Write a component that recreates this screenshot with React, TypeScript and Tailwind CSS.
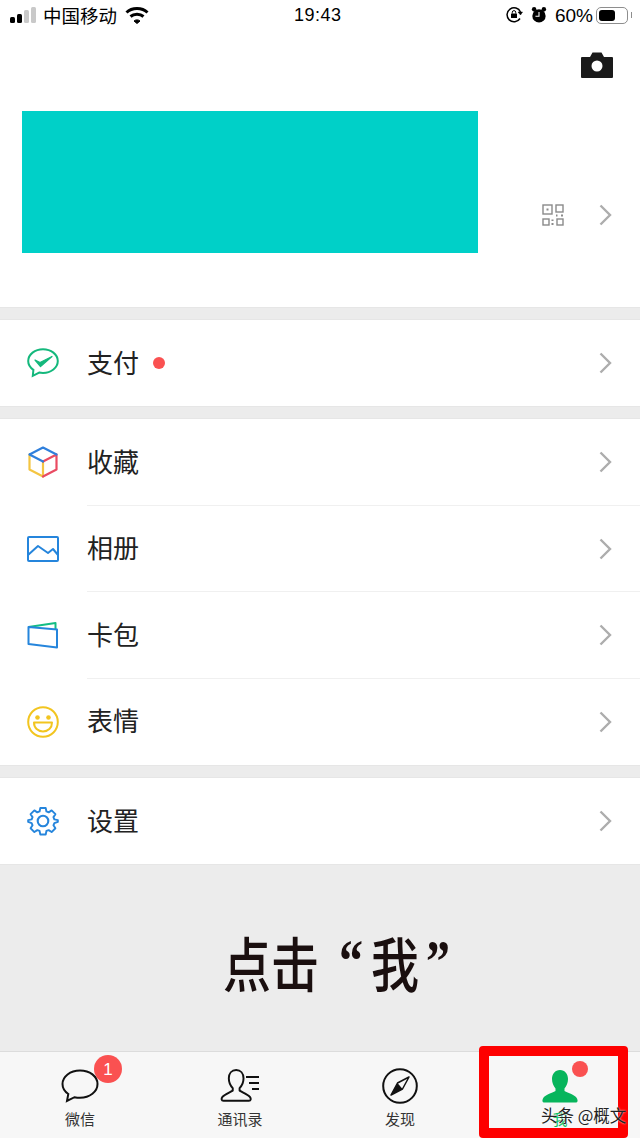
import type { ReactNode } from 'react';

const cjk = { fontFamily: '"Noto Sans CJK SC", "Liberation Sans", sans-serif' };
const latin = { fontFamily: '"Liberation Sans", sans-serif' };

function Chevron() {
  return (
    <svg width="14" height="22" viewBox="0 0 14 22" fill="none" stroke="#adadad" strokeWidth="2.400">
      <path d="M2.500 1.500 12 11 2.500 20.500" />
    </svg>
  );
}

function PayIcon() {
  return (
    <svg width="32" height="30" viewBox="0 0 32 30" fill="none">
      <path d="M16 1.200C8 1.200 1.200 6.400 1.200 13c0 3.600 2 6.700 5.200 8.800L5.800 27.800l6.400-3.300c1.200.3 2.500.4 3.800.4 8 0 14.800-5.300 14.800-11.900S24 1.200 16 1.200Z" stroke="#14b87c" strokeWidth="2" />
      <path d="M8 12 13 14.500 25 8.500 13.500 18.500Z" fill="#14b87c" stroke="#14b87c" strokeWidth="1.200" strokeLinejoin="round" />
    </svg>
  );
}

function BoxIcon() {
  return (
    <svg width="30" height="32" viewBox="0 0 30 32" fill="none" strokeWidth="2.200" strokeLinecap="round" strokeLinejoin="round">
      <path d="M1.500 8.500V23.500L15 30.500V15.500" stroke="#f4c542" />
      <path d="M15 15.500 28.500 8.500V23.500L15 30.500" stroke="#e94b62" />
      <path d="M1.500 8.500 15 1.500 28.500 8.500M1.500 8.500 15 15.500" stroke="#2f7fdc" />
    </svg>
  );
}

function PhotoIcon() {
  return (
    <svg width="32" height="26" viewBox="0 0 32 26" fill="none" stroke="#2585dc" strokeWidth="2" strokeLinejoin="round">
      <rect x="1" y="1" width="30" height="24" rx="1" />
      <path d="M1 19 11 10 21 17 26 13 31 19" />
    </svg>
  );
}

function CardIcon() {
  return (
    <svg width="32" height="28" viewBox="0 0 32 28" fill="none" strokeWidth="2" strokeLinejoin="round">
      <path d="M1.500 6 28.500 2V8" stroke="#12bd84" />
      <path d="M1.500 6 30 8.500V26.500L1.500 23Z" stroke="#2585dc" />
    </svg>
  );
}

function SmileIcon() {
  return (
    <svg width="32" height="32" viewBox="0 0 32 32" fill="none">
      <circle cx="16" cy="16" r="14.800" stroke="#f2c520" strokeWidth="2" />
      <circle cx="10.500" cy="11.500" r="2.300" fill="#f2c520" />
      <circle cx="21.500" cy="11.500" r="2.300" fill="#f2c520" />
      <path d="M7 16.500h18c0 5.500-4 9-9 9s-9-3.500-9-9Z" stroke="#f2c520" strokeWidth="2" strokeLinejoin="round" />
    </svg>
  );
}

function GearIcon() {
  return (
    <svg width="32" height="32" viewBox="0 0 32 32" fill="none" stroke="#2585dc" strokeWidth="2.100" strokeLinejoin="round">
      <path d="M13 1.500h6l.8 3.900 2.500 1 3.300-2.200 4.200 4.200-2.200 3.300 1 2.500 3.900.8v2l-3.900 1.300-1 2.500 2.200 3.300-4.200 4.200-3.300-2.200-2.500 1-.8 3.900h-6l-.8-3.900-2.500-1-3.300 2.200-4.200-4.200 2.200-3.300-1-2.500-3.900-1.300v-2l3.900-.8 1-2.500-2.200-3.300 4.200-4.200 3.300 2.200 2.500-1Z" transform="translate(1.600 1.600) scale(.9)" />
      <circle cx="16" cy="16" r="5.300" />
    </svg>
  );
}

function Row({ icon, label, divider, dot }: { icon: ReactNode; label: string; divider?: boolean; dot?: boolean }) {
  return (
    <div className="relative flex h-full items-center bg-white pl-[27px] pr-[28px]">
      <div className="flex w-[32px] justify-center">{icon}</div>
      <span className="mb-[3px] ml-[28px] text-[26px] leading-none text-[#222222]" style={cjk}>{label}</span>
      {dot && <span className="ml-[14px] h-[12px] w-[12px] rounded-full bg-[#fa5151]" />}
      <div className="ml-auto flex"><Chevron /></div>
      {divider && <div className="absolute bottom-0 left-[87px] right-0 h-px bg-[#f0f0f0]" />}
    </div>
  );
}

function Tab({ icon, label, color }: { icon: ReactNode; label: string; color?: string }) {
  return (
    <div className="relative flex flex-1 flex-col items-center pt-[15px]">
      <div className="flex h-[38px] items-center justify-center">{icon}</div>
      <span className={`mt-[4px] text-[15px] leading-[20px] ${color ?? 'text-[#333333]'}`} style={cjk}>{label}</span>
    </div>
  );
}

function Gap() {
  return <div className="h-[13px] border-y border-[#e6e6e6] bg-[#ececec]" />;
}

export default function App() {
  return (
    <div className="relative flex h-[1138px] w-[640px] flex-col overflow-hidden bg-white" style={cjk}>
      {/* status bar */}
      <div className="flex h-[30px] items-center justify-between pl-[10px] pr-[8px] text-black">
        <div className="flex items-center">
          <svg width="27" height="18" viewBox="0 0 27 18" fill="#000">
            <rect x="0" y="11" width="5" height="6" rx="1.500" />
            <rect x="7" y="8" width="5" height="9" rx="1.500" />
            <rect x="14" y="4" width="5" height="13" rx="1.500" fill="#c9c9c9" />
            <rect x="21" y="1" width="5" height="16" rx="1.500" fill="#c9c9c9" />
          </svg>
          <span className="ml-[6px] text-[18.500px] leading-none">中国移动</span>
          <svg className="ml-[8px]" width="24" height="18" viewBox="0 0 24 18" fill="none" stroke="#000" strokeWidth="3">
            <path d="M1.500 6.500C7 1.200 17 1.200 22.500 6.500" />
            <path d="M5.500 10.500C9 7.500 15 7.500 18.500 10.500" />
            <path d="M9 15 12 17.500 15 15C13.500 13.500 10.500 13.500 9 15Z" fill="#000" strokeWidth="1" />
          </svg>
        </div>
        <span className="absolute left-[294px] text-[18px] font-medium leading-none tracking-[0.5px]" style={latin}>19:43</span>
        <div className="flex items-center">
          <svg width="18" height="18" viewBox="0 0 18 18" fill="none" stroke="#000" strokeWidth="1.500">
            <path d="M15 12.500A7 7 0 1 1 15.500 6" />
            <path d="M13 6h4.500L15.500 9Z" fill="#000" strokeWidth=".5" />
            <rect x="6" y="7.500" width="6" height="4.500" rx=".5" fill="#000" stroke="none" />
            <path d="M7.300 7.500V6.300a1.700 1.700 0 0 1 3.400 0v1.200" strokeWidth="1" />
          </svg>
          <svg className="ml-[8px]" width="16" height="18" viewBox="0 0 18 20" fill="#000">
            <circle cx="9" cy="11" r="7.500" />
            <circle cx="3.500" cy="3.500" r="2.500" />
            <circle cx="14.500" cy="3.500" r="2.500" />
            <path d="M9 6.500V11.500H5" fill="none" stroke="#fff" strokeWidth="1.200" />
          </svg>
          <span className="ml-[8px] text-[19px] leading-none" style={latin}>60%</span>
          <div className="ml-[3px] flex h-[17px] w-[32px] items-center rounded-[5px] border border-[#8e8e8e] p-[2px]">
            <div className="h-full w-[16px] rounded-[3px] bg-black" />
          </div>
          <div className="ml-[3px] h-[6px] w-[1px] bg-[#8e8e8e]" />
        </div>
      </div>

      {/* profile header */}
      <div className="flex h-[277px] flex-col bg-white">
        <div className="flex justify-end pr-[27px] pt-[22px]">
          <svg width="32" height="26" viewBox="0 0 32 26" fill="#1a1a1a">
            <path fillRule="evenodd" d="M1 5h8l2.500-4.500h9L23 5h8a1 1 0 0 1 1 1v19a1 1 0 0 1-1 1H1a1 1 0 0 1-1-1V6a1 1 0 0 1 1-1Zm15 3.500a5.500 5.500 0 1 0 0 11 5.500 5.500 0 0 0 0-11Z" />
          </svg>
        </div>
        <div className="mt-[33px] flex items-end pl-[22px] pr-[28px]">
          <div className="h-[142px] w-[456px] bg-[#00d0c8]" />
          <svg className="mb-[27px] ml-auto" width="22" height="22" viewBox="0 0 22 22" fill="none" stroke="#8a8a8a" strokeWidth="1.400">
            <rect x="1" y="1" width="9" height="9" />
            <rect x="14" y="1" width="7" height="7" />
            <rect x="1" y="15" width="6" height="6" />
            <rect x="15" y="15" width="6" height="6" />
            <rect x="4.500" y="4.500" width="2" height="2" fill="#8a8a8a" stroke="none" />
            <path d="M14 11.500h1.500M19 11.500h2M10.500 15.500v1.500M10.500 19v2" strokeWidth="2" />
          </svg>
          <div className="mb-[27px] ml-[34px] flex"><Chevron /></div>
        </div>
      </div>

      <Gap />
      <div className="h-[86px]"><Row icon={<PayIcon />} label="支付" dot /></div>
      <Gap />
      <div className="grid h-[346px] grid-rows-4">
        <Row icon={<BoxIcon />} label="收藏" divider />
        <Row icon={<PhotoIcon />} label="相册" divider />
        <Row icon={<CardIcon />} label="卡包" divider />
        <Row icon={<SmileIcon />} label="表情" />
      </div>
      <Gap />
      <div className="h-[86px]"><Row icon={<GearIcon />} label="设置" /></div>

      {/* caption area */}
      <div className="flex flex-1 items-start border-t border-[#e6e6e6] bg-[#ececec] pl-[223px] pt-[61px]">
        <div className="flex scale-y-[1.22] items-start whitespace-nowrap text-[48px] font-medium leading-[70px] text-[#1a0f0f]">
          <span>点击</span>
          <span className="ml-[20px] font-bold" style={{ fontFamily: '"Liberation Serif", serif' }}>“</span>
          <span className="ml-[8px]">我</span>
          <span className="ml-[7px] font-bold" style={{ fontFamily: '"Liberation Serif", serif' }}>”</span>
        </div>
      </div>

      {/* tab bar */}
      <div className="flex h-[87px] border-t border-[#dcdcdc] bg-[#f7f7f7]">
        <Tab
          label="微信"
          icon={
            <svg width="38" height="34" viewBox="0 0 38 34" fill="none" stroke="#111" strokeWidth="2">
              <path d="M19 1.500C9.200 1.500 1.500 7.600 1.500 15c0 4 2.200 7.500 5.800 10l-1.300 7 7.500-3.800c1.700.4 3.600.6 5.500.6 9.800 0 17.500-6.200 17.500-13.800S28.800 1.500 19 1.500Z" />
            </svg>
          }
        />
        <Tab
          label="通讯录"
          icon={
            <svg width="42" height="34" viewBox="0 0 42 34" fill="none" stroke="#111" strokeWidth="2" strokeLinejoin="round">
              <path d="M16.500 1c-4.500 0-7.500 3.500-7.500 8.500 0 4 1.500 7.500 4 10v2.500c-3 2-8 3.500-10.500 6.500-1.500 2-1 4 1 4h26c2 0 2.500-2 1-4-2.500-3-7.500-4.500-10.500-6.500v-2.500c2.500-2.500 4-5.500 4-10 0-5-3-8.500-7.500-8.500Z" transform="translate(1 0) scale(.98)" />
              <path d="M27 8h13M30 14h10M33 20h7" />
            </svg>
          }
        />
        <Tab
          label="发现"
          icon={
            <svg width="36" height="36" viewBox="0 0 36 36" fill="none" stroke="#111" strokeWidth="2">
              <circle cx="18" cy="18" r="16.800" />
              <path d="M27 9 15.500 15 9 27 20.500 21Z" strokeLinejoin="round" strokeWidth="1.500" />
              <path d="M15.500 15 9 27 20.500 21Z" fill="#111" stroke="none" />
            </svg>
          }
        />
        <Tab
          label="我"
          color="text-[#07c160]"
          icon={
            <svg width="36" height="34" viewBox="0 0 36 34" fill="#07b55c">
              <path d="M18 1c-5 0-8 4-8 9 0 4 1.500 7 3.500 9.500v2.500C10 24 3 25.500 1 29.500-.2 32 .5 33.500 2.500 33.500h31c2 0 2.700-1.500 1.500-4-2-4-9-5.500-12.500-7.500v-2.500C24.500 17 26 14 26 10c0-5-3-9-8-9Z" />
            </svg>
          }
        />
      </div>

      {/* badges and overlays */}
      <div className="absolute left-[94px] top-[1055px] flex h-[28px] w-[28px] items-center justify-center rounded-full bg-[#fa5151] text-[17px] leading-none text-white" style={latin}>1</div>
      <div className="absolute left-[479px] top-[1046px] h-[92px] w-[149px] rounded-[4px] border-[10px] border-[#fe0000]" />
      <div className="absolute left-[572px] top-[1061px] h-[16px] w-[16px] rounded-full bg-[#fa5151]" />
      <div className="absolute left-[541px] top-[1105px] whitespace-nowrap text-[16.500px] leading-[20px] text-[#222222] [text-shadow:0_0_2px_#ffffff]" style={cjk}>头条 @概文</div>
    </div>
  );
}
